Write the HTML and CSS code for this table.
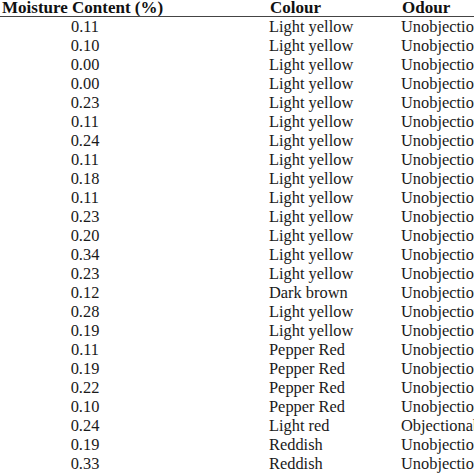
FILE: index.html
```html
<!DOCTYPE html>
<html>
<head>
<meta charset="utf-8">
<link rel="stylesheet" href="styles.css">
</head>
<body>
<div class="table">
  <div class="row head">
    <div class="c1">Moisture Content (%)</div>
    <div class="c2">Colour</div>
    <div class="c3">Odour</div>
  </div>
  <div class="row"><div class="c1 num">0.11</div><div class="c2">Light yellow</div><div class="c3">Unobjectionable</div></div>
  <div class="row"><div class="c1 num">0.10</div><div class="c2">Light yellow</div><div class="c3">Unobjectionable</div></div>
  <div class="row"><div class="c1 num">0.00</div><div class="c2">Light yellow</div><div class="c3">Unobjectionable</div></div>
  <div class="row"><div class="c1 num">0.00</div><div class="c2">Light yellow</div><div class="c3">Unobjectionable</div></div>
  <div class="row"><div class="c1 num">0.23</div><div class="c2">Light yellow</div><div class="c3">Unobjectionable</div></div>
  <div class="row"><div class="c1 num">0.11</div><div class="c2">Light yellow</div><div class="c3">Unobjectionable</div></div>
  <div class="row"><div class="c1 num">0.24</div><div class="c2">Light yellow</div><div class="c3">Unobjectionable</div></div>
  <div class="row"><div class="c1 num">0.11</div><div class="c2">Light yellow</div><div class="c3">Unobjectionable</div></div>
  <div class="row"><div class="c1 num">0.18</div><div class="c2">Light yellow</div><div class="c3">Unobjectionable</div></div>
  <div class="row"><div class="c1 num">0.11</div><div class="c2">Light yellow</div><div class="c3">Unobjectionable</div></div>
  <div class="row"><div class="c1 num">0.23</div><div class="c2">Light yellow</div><div class="c3">Unobjectionable</div></div>
  <div class="row"><div class="c1 num">0.20</div><div class="c2">Light yellow</div><div class="c3">Unobjectionable</div></div>
  <div class="row"><div class="c1 num">0.34</div><div class="c2">Light yellow</div><div class="c3">Unobjectionable</div></div>
  <div class="row"><div class="c1 num">0.23</div><div class="c2">Light yellow</div><div class="c3">Unobjectionable</div></div>
  <div class="row"><div class="c1 num">0.12</div><div class="c2">Dark brown</div><div class="c3">Unobjectionable</div></div>
  <div class="row"><div class="c1 num">0.28</div><div class="c2">Light yellow</div><div class="c3">Unobjectionable</div></div>
  <div class="row"><div class="c1 num">0.19</div><div class="c2">Light yellow</div><div class="c3">Unobjectionable</div></div>
  <div class="row"><div class="c1 num">0.11</div><div class="c2">Pepper Red</div><div class="c3">Unobjectionable</div></div>
  <div class="row"><div class="c1 num">0.19</div><div class="c2">Pepper Red</div><div class="c3">Unobjectionable</div></div>
  <div class="row"><div class="c1 num">0.22</div><div class="c2">Pepper Red</div><div class="c3">Unobjectionable</div></div>
  <div class="row"><div class="c1 num">0.10</div><div class="c2">Pepper Red</div><div class="c3">Unobjectionable</div></div>
  <div class="row"><div class="c1 num">0.24</div><div class="c2">Light red</div><div class="c3">Objectionable</div></div>
  <div class="row"><div class="c1 num">0.19</div><div class="c2">Reddish</div><div class="c3">Unobjectionable</div></div>
  <div class="row"><div class="c1 num">0.33</div><div class="c2">Reddish</div><div class="c3">Unobjectionable</div></div>
</div>
</body>
</html>
```
FILE: styles.css
```css
html, body {
  margin: 0;
  padding: 0;
  background: #fff;
  overflow: hidden;
}
body {
  font-family: "Liberation Serif", "Times New Roman", serif;
  font-size: 16.4px;
  color: #1a1a1a;
}
.table {
  width: 474px;
  margin-top: -1px;
}
.row {
  display: grid;
  grid-template-columns: 170px 231px 1fr;
  height: 19px;
  line-height: 19px;
  white-space: nowrap;
  overflow: hidden;
}
.head {
  font-weight: bold;
  font-size: 17px;
  height: 17px;
  line-height: 17px;
  border-bottom: 1px solid #444;
  color: #111;
}
.head .c1 {
  padding-left: 2px;
}
.c2 {
  padding-left: 99px;
}
.head .c2 {
  padding-left: 100px;
}
.c3 {
  overflow: hidden;
}
.head .c3 {
  padding-left: 1px;
}
.num {
  text-align: center;
}
```
